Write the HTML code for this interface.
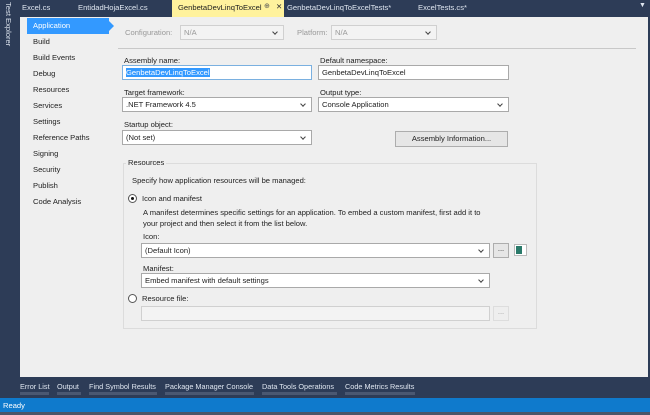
<!DOCTYPE html><html><head><style>
*{margin:0;padding:0;box-sizing:border-box}
body{width:650px;height:415px;background:#2d3c57;font-family:"Liberation Sans",sans-serif;font-size:7.6px;color:#1e1e1e;position:relative;overflow:hidden}
.a{position:absolute;white-space:nowrap}
.t{color:#dfe6f0}
.panel{left:20px;top:17px;width:628px;height:360px;background:#efefef}
.side{color:#222}
.box{background:#fff;border:1px solid #a9a9a9;height:15px;padding:2px 3px;line-height:10px}
.dis{background:#f3f3f3;border-color:#d0d0d0;color:#999}
.dd:after{content:"";position:absolute;right:6px;top:4px;width:3px;height:3px;border-right:1px solid #444;border-bottom:1px solid #444;transform:rotate(45deg)}
.btn{background:#e6e6e6;border:1px solid #adadad;text-align:center;line-height:14px}
.rad{width:9px;height:9px;border:1px solid #555;border-radius:50%;background:#fff}
.bt{position:absolute;top:392px;height:3px;background:#4a5872}
.bl{top:382px;font-size:7.3px}
</style></head><body>
<div class="a t" style="left:13px;top:2px;transform:rotate(90deg);transform-origin:0 0">Test Explorer</div>
<div class="a t" style="left:22px;top:3px">Excel.cs</div>
<div class="a t" style="left:78px;top:3px">EntidadHojaExcel.cs</div>
<div class="a" style="left:172px;top:0;width:112px;height:17px;background:#fff29d"></div>
<div class="a" style="left:178px;top:3px;color:#1e1e1e">GenbetaDevLinqToExcel</div>
<div class="a" style="left:264px;top:2px;color:#555;font-size:7px">⊕</div><div class="a" style="left:276px;top:2px;color:#333">✕</div>
<div class="a t" style="left:287px;top:3px">GenbetaDevLinqToExcelTests*</div>
<div class="a t" style="left:418px;top:3px">ExcelTests.cs*</div>
<div class="a t" style="left:639px;top:2px;font-size:7px">▼</div>
<div class="a panel"></div>
<div class="a" style="left:27px;top:18px;width:82px;height:16px;background:#3399ff"></div>
<div class="a" style="left:109px;top:21px;width:0;height:0;border-left:5px solid #3399ff;border-top:5px solid transparent;border-bottom:5px solid transparent"></div>
<div class="a" style="left:33px;top:21px;color:#fff">Application</div>
<div class="a side" style="left:33px;top:37px">Build</div>
<div class="a side" style="left:33px;top:53px">Build Events</div>
<div class="a side" style="left:33px;top:69px">Debug</div>
<div class="a side" style="left:33px;top:85px">Resources</div>
<div class="a side" style="left:33px;top:101px">Services</div>
<div class="a side" style="left:33px;top:117px">Settings</div>
<div class="a side" style="left:33px;top:133px">Reference Paths</div>
<div class="a side" style="left:33px;top:149px">Signing</div>
<div class="a side" style="left:33px;top:165px">Security</div>
<div class="a side" style="left:33px;top:181px">Publish</div>
<div class="a side" style="left:33px;top:197px">Code Analysis</div>
<div class="a" style="left:125px;top:28px;color:#999">Configuration:</div>
<div class="a box dis dd" style="left:180px;top:25px;width:104px">N/A</div>
<div class="a" style="left:297px;top:28px;color:#999">Platform:</div>
<div class="a box dis dd" style="left:331px;top:25px;width:106px">N/A</div>
<div class="a" style="left:118px;top:48px;width:518px;height:1px;background:#c8c8c8"></div>
<div class="a" style="left:124px;top:56px">Assembly name:</div>
<div class="a box" style="left:122px;top:65px;width:190px;border-color:#7ab0e0"><span style="background:#3399ff;color:#fff">GenbetaDevLinqToExcel</span></div>
<div class="a" style="left:320px;top:56px">Default namespace:</div>
<div class="a box" style="left:318px;top:65px;width:191px">GenbetaDevLinqToExcel</div>
<div class="a" style="left:124px;top:88px">Target framework:</div>
<div class="a box dd" style="left:122px;top:97px;width:190px">.NET Framework 4.5</div>
<div class="a" style="left:320px;top:88px">Output type:</div>
<div class="a box dd" style="left:318px;top:97px;width:191px">Console Application</div>
<div class="a" style="left:124px;top:120px">Startup object:</div>
<div class="a box dd" style="left:122px;top:130px;width:190px">(Not set)</div>
<div class="a btn" style="left:395px;top:131px;width:113px;height:16px">Assembly Information...</div>
<div class="a" style="left:123px;top:163px;width:414px;height:166px;border:1px solid #dcdcdc"></div>
<div class="a" style="left:126px;top:158px;background:#efefef;padding:0 2px">Resources</div>
<div class="a" style="left:132px;top:176px">Specify how application resources will be managed:</div>
<div class="a rad" style="left:128px;top:194px"></div><div class="a" style="left:131px;top:197px;width:3px;height:3px;background:#111;border-radius:50%"></div>
<div class="a" style="left:142px;top:194px">Icon and manifest</div>
<div class="a" style="left:143px;top:208px">A manifest determines specific settings for an application. To embed a custom manifest, first add it to</div>
<div class="a" style="left:143px;top:219px">your project and then select it from the list below.</div>
<div class="a" style="left:143px;top:232px">Icon:</div>
<div class="a box dd" style="left:141px;top:243px;width:349px">(Default Icon)</div>
<div class="a btn" style="left:493px;top:243px;width:16px;height:15px;line-height:10px">...</div>
<div class="a" style="left:514px;top:244px;width:13px;height:12px;background:#fff;border:1px solid #bbb"></div>
<div class="a" style="left:516px;top:246px;width:6px;height:8px;background:#2a7a6a"></div>
<div class="a" style="left:143px;top:264px">Manifest:</div>
<div class="a box dd" style="left:141px;top:273px;width:349px">Embed manifest with default settings</div>
<div class="a rad" style="left:128px;top:294px"></div>
<div class="a" style="left:142px;top:294px">Resource file:</div>
<div class="a box dis" style="left:141px;top:306px;width:349px"></div>
<div class="a btn" style="left:493px;top:306px;width:16px;height:15px;line-height:10px;color:#999;background:#eee;border-color:#ddd">...</div>
<div class="a t bl" style="left:20px">Error List</div><div class="bt" style="left:20px;width:29px"></div>
<div class="a t bl" style="left:57px">Output</div><div class="bt" style="left:57px;width:24px"></div>
<div class="a t bl" style="left:89px">Find Symbol Results</div><div class="bt" style="left:89px;width:68px"></div>
<div class="a t bl" style="left:165px">Package Manager Console</div><div class="bt" style="left:165px;width:89px"></div>
<div class="a t bl" style="left:262px">Data Tools Operations</div><div class="bt" style="left:262px;width:75px"></div>
<div class="a t bl" style="left:345px">Code Metrics Results</div><div class="bt" style="left:345px;width:70px"></div>
<div class="a" style="left:0;top:398px;width:650px;height:14px;background:#0f7acc"></div>
<div class="a" style="left:3px;top:401px;color:#fff">Ready</div>
<div class="a" style="left:0;top:412px;width:650px;height:3px;background:#4a5568"></div>
</body></html>
